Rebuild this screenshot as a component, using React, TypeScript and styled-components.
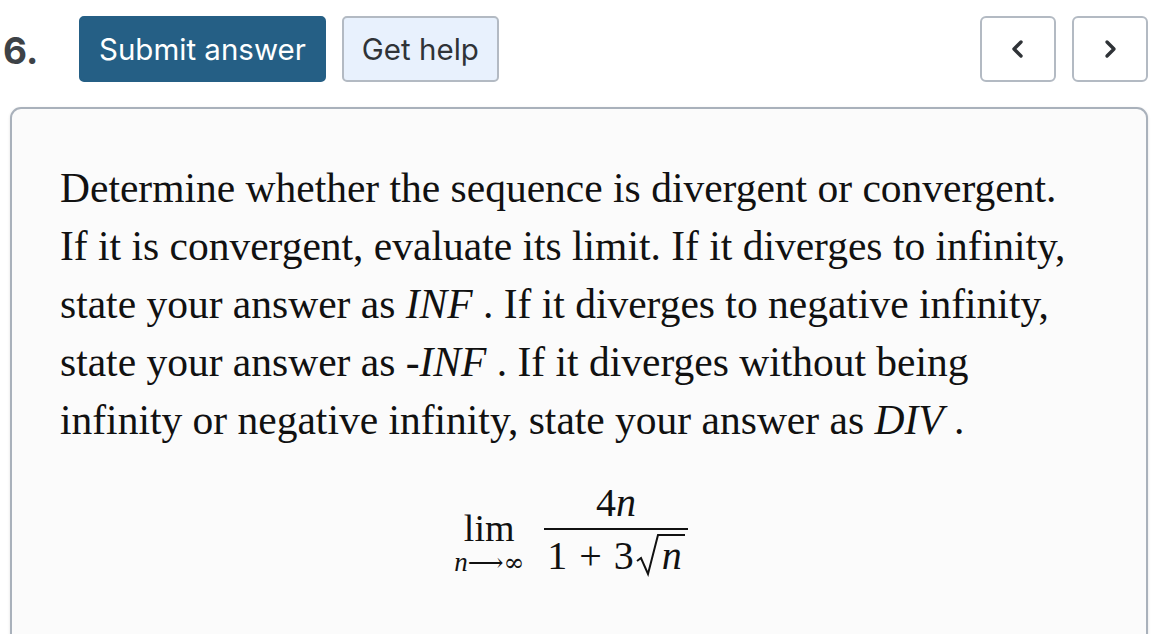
import React from 'react';
import styled, { createGlobalStyle } from 'styled-components';

const GlobalStyle = createGlobalStyle`
  html, body {
    margin: 0;
    padding: 0;
    background: #ffffff;
  }
  body {
    font-family: Inter, 'Liberation Sans', Arial, sans-serif;
    color: #2f3337;
  }
`;

const Page = styled.div`
  width: 1176px;
  height: 634px;
  overflow: hidden;
  padding: 16px 28px 0 0;
  box-sizing: border-box;
`;

const Toolbar = styled.div`
  display: flex;
  align-items: center;
  height: 66px;
`;

const Number = styled.span`
  font-weight: 700;
  font-size: 37px;
  color: #3d4247;
  width: 79px;
  padding-left: 3px;
  box-sizing: border-box;
  margin-top: 2px;
`;

const Button = styled.button<{ $primary?: boolean }>`
  height: 66px;
  box-sizing: border-box;
  border-radius: 5px;
  font-family: Inter, 'Liberation Sans', Arial, sans-serif;
  font-size: 29.5px;
  padding: 0 18px;
  margin-right: 16px;
  border: 2px solid ${(p) => (p.$primary ? '#255f85' : '#b3bac3')};
  background: ${(p) => (p.$primary ? '#255f85' : '#e8f1fd')};
  color: ${(p) => (p.$primary ? '#ffffff' : '#2f3337')};
`;

const Spacer = styled.div`
  flex: 1;
`;

const NavButton = styled.button`
  width: 76px;
  height: 66px;
  box-sizing: border-box;
  border: 2px solid #b3bac3;
  border-radius: 6px;
  background: #ffffff;
  display: flex;
  align-items: center;
  justify-content: center;
  margin-left: 16px;
  padding: 0;
`;

const Card = styled.div`
  margin: 25px 0 0 10px;
  height: 560px;
  border: 2px solid #a9b1bb;
  border-radius: 11px;
  background: #fbfbfb;
  box-shadow: 0 1px 3px rgba(0, 0, 0, 0.12);
  padding: 50px 0 0 48px;
  box-sizing: border-box;
`;

const Prose = styled.div`
  font-family: 'Liberation Serif', 'Times New Roman', serif;
  font-size: 41.5px;
  line-height: 58px;
  color: #111;
`;

const Line = styled.div`
  white-space: nowrap;
`;

const Em = styled.i`
  font-style: italic;
`;

const MathRow = styled.div`
  display: flex;
  justify-content: center;
  align-items: flex-start;
  margin-top: 34px;
  margin-left: -64px;
  font-family: 'Liberation Serif', 'Times New Roman', serif;
  color: #111;
`;

const Limit = styled.div`
  display: flex;
  flex-direction: column;
  align-items: center;
  margin-right: 20px;
  margin-top: 26px;
`;

const LimWord = styled.span`
  font-size: 38px;
  line-height: 38px;
`;

const LimSub = styled.span`
  font-size: 27px;
  line-height: 30px;
  white-space: nowrap;
`;

const Symbol = styled.span`
  font-family: 'DejaVu Serif', serif;
  font-size: 25px;
`;

const Fraction = styled.div`
  display: flex;
  flex-direction: column;
  align-items: center;
  font-size: 40px;
`;

const Numer = styled.div`
  line-height: 40px;
  padding: 0 6px 5px;
`;

const Rule = styled.div`
  align-self: stretch;
  height: 2px;
  background: #111;
`;

const Denom = styled.div`
  line-height: 44px;
  padding: 4px 3px 0;
  display: flex;
  align-items: flex-end;
`;

const Var = styled.i`
  font-style: italic;
`;

const Op = styled.span`
  margin: 0 12px;
`;

const Sqrt = styled.span`
  display: inline-flex;
  align-items: flex-end;
  margin-left: 2px;
`;

const Radicand = styled.span`
  border-top: 2px solid #111;
  padding: 0 3px 0 2px;
  line-height: 40px;
  margin-bottom: 2px;
`;

const Chevron = ({ dir }: { dir: 'left' | 'right' }) => (
  <svg width="16" height="22" viewBox="0 0 16 22">
    <path
      d={dir === 'left' ? 'M11 4 L4 11 L11 18' : 'M5 4 L12 11 L5 18'}
      fill="none"
      stroke="#2f3337"
      strokeWidth="3.4"
      strokeLinecap="round"
      strokeLinejoin="round"
    />
  </svg>
);

const RadicalSign = () => (
  <svg width="24" height="44" viewBox="0 0 24 44" style={{ display: 'block' }}>
    <path d="M1 27 L5 24 L12 40 L22 1 L24 1" fill="none" stroke="#111" strokeWidth="2" />
  </svg>
);

export default function App() {
  return (
    <>
      <GlobalStyle />
      <Page>
        <Toolbar>
          <Number>6.</Number>
          <Button $primary>Submit answer</Button>
          <Button>Get help</Button>
          <Spacer />
          <NavButton aria-label="Previous">
            <Chevron dir="left" />
          </NavButton>
          <NavButton aria-label="Next">
            <Chevron dir="right" />
          </NavButton>
        </Toolbar>
        <Card>
          <Prose>
            <Line>Determine whether the sequence is divergent or convergent.</Line>
            <Line>If it is convergent, evaluate its limit. If it diverges to infinity,</Line>
            <Line>
              state your answer as <Em>INF</Em> . If it diverges to negative infinity,
            </Line>
            <Line>
              state your answer as <Em>-INF</Em> . If it diverges without being
            </Line>
            <Line>
              infinity or negative infinity, state your answer as <Em>DIV</Em> .
            </Line>
          </Prose>
          <MathRow>
            <Limit>
              <LimWord>lim</LimWord>
              <LimSub>
                <Var>n</Var>
                <Symbol>⟶∞</Symbol>
              </LimSub>
            </Limit>
            <Fraction>
              <Numer>
                4<Var>n</Var>
              </Numer>
              <Rule />
              <Denom>
                1<Op>+</Op>3
                <Sqrt>
                  <RadicalSign />
                  <Radicand>
                    <Var>n</Var>
                  </Radicand>
                </Sqrt>
              </Denom>
            </Fraction>
          </MathRow>
        </Card>
      </Page>
    </>
  );
}
